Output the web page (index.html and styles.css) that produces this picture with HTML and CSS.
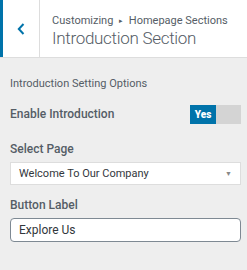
FILE: index.html
```html
<!DOCTYPE html>
<html>
<head>
<meta charset="utf-8">
<link rel="stylesheet" href="styles.css">
</head>
<body>
<div class="header">
  <div class="back">
    <svg width="8" height="12" viewBox="0 0 8 12"><path d="M6.5 1 L1.8 6 L6.5 11" fill="none" stroke="#0073aa" stroke-width="2"/></svg>
  </div>
  <div class="titles">
    <div class="crumb">Customizing <span class="sep">▸</span> Homepage Sections</div>
    <div class="title">Introduction Section</div>
  </div>
</div>
<div class="body">
  <div class="desc">Introduction Setting Options</div>
  <div class="row">
    <div class="label">Enable Introduction</div>
    <div class="toggle"><span class="yes">Yes</span><span class="off"></span></div>
  </div>
  <div class="label field-label">Select Page</div>
  <div class="select"><span>Welcome To Our Company</span><span class="arrow">▼</span></div>
  <div class="label field-label second">Button Label</div>
  <div class="input">Explore Us</div>
</div>
</body>
</html>
```
FILE: styles.css
```css
html, body { margin: 0; padding: 0; }
body {
  background: #eeeeee;
  font-family: "Roboto", "Open Sans", sans-serif;
  color: #555d66;
  width: 247px;
  height: 270px;
  overflow: hidden;
}
.header {
  display: flex;
  height: 57px;
  background: #fff;
  border-bottom: 1px solid #dddddd;
}
.back {
  flex: none;
  width: 36px;
  border-left: 3px solid #0073aa;
  border-right: 1px solid #dddddd;
  display: flex;
  align-items: center;
  justify-content: center;
}
.back svg { margin-top: 1px; }
.titles {
  padding: 13px 0 0 12px;
  white-space: nowrap;
}
.crumb {
  font-size: 11px;
  line-height: 16px;
  color: #555d66;
}
.crumb .sep { font-size: 7px; position: relative; top: -1px; margin: 0 3px; }
.title {
  font-size: 17px;
  font-weight: 300;
  letter-spacing: -0.3px;
  line-height: 17px;
  color: #555d66;
}
.body {
  padding: 18px 6px 0 10px;
}
.desc {
  font-size: 11px;
  line-height: 16px;
  color: #555d66;
}
.row {
  display: flex;
  justify-content: space-between;
  align-items: center;
  margin-top: 12px;
  height: 20px;
}
.label {
  font-size: 12px;
  font-weight: 500;
  color: #555d66;
  line-height: 20px;
}
.toggle {
  display: flex;
  height: 19px;
}
.yes {
  width: 26px;
  background: #0073aa;
  color: #fff;
  font-size: 10px;
  font-weight: 900;
  display: flex;
  align-items: center;
  justify-content: center;
}
.off {
  width: 25px;
  background: #d4d4d4;
}
.field-label { margin-top: 16px; line-height: 18px; }
.field-label.second { margin-top: 11px; }
.select {
  box-sizing: border-box;
  margin-top: 4px;
  height: 23px;
  background: #fff;
  border: 1px solid #dddddd;
  display: flex;
  justify-content: space-between;
  align-items: center;
  padding: 0 8px 0 8px;
  font-size: 11px;
  color: #32373c;
}
.arrow { font-size: 7px; color: #888; }
.input {
  box-sizing: border-box;
  margin-top: 4px;
  height: 24px;
  background: #fff;
  border: 1px solid #7e8993;
  border-radius: 4px;
  display: flex;
  align-items: center;
  padding: 0 8px;
  font-size: 12px;
  color: #32373c;
}
```
